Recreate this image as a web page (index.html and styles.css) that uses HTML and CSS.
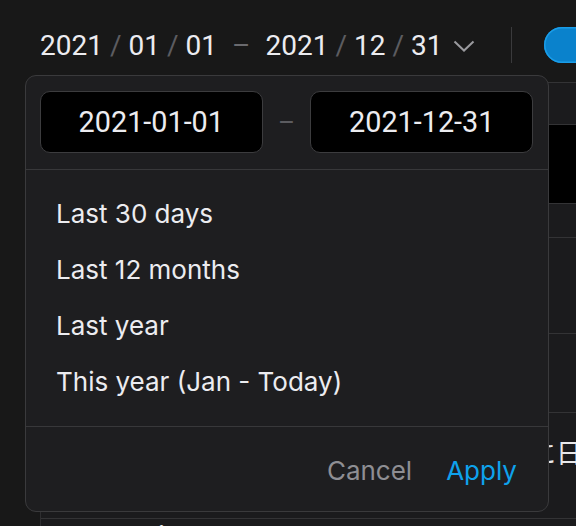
FILE: index.html
```html
<!DOCTYPE html>
<html>
<head>
<meta charset="utf-8">
<link rel="stylesheet" href="styles.css">
</head>
<body>
<div class="page">
  <div class="header">
    <span class="num">2021</span><span class="sl">/</span><span class="num">01</span><span class="sl">/</span><span class="num">01</span>
    <span class="dash">–</span>
    <span class="num">2021</span><span class="sl">/</span><span class="num">12</span><span class="sl">/</span><span class="num">31</span>
    <svg class="chev" width="22" height="12" viewBox="0 0 22 12"><polyline points="1.5,1.5 11,10.5 20.5,1.5" fill="none" stroke="#9a9a9e" stroke-width="2"/></svg>
    <span class="vdiv"></span>
    <span class="toggle"></span>
  </div>
  <div class="table">
    <div class="row r1"></div>
    <div class="row r2"></div>
    <div class="row r3"></div>
    <div class="row r4"></div>
    <div class="row r5"></div>
    <div class="row r6"><span class="cjk">に日</span></div>
    <div class="row r7"><span class="dot"></span><span class="bold">PP Timer</span><span class="jp">エドリテー フォーンド◯ゲ日</span></div>
  </div>

  <div class="popup">
    <div class="inputs">
      <div class="inp">2021-01-01</div>
      <span class="idash">–</span>
      <div class="inp">2021-12-31</div>
    </div>
    <ul class="menu">
      <li>Last 30 days</li>
      <li>Last 12 months</li>
      <li>Last year</li>
      <li>This year (Jan - Today)</li>
    </ul>
    <div class="footer">
      <span class="cancel">Cancel</span>
      <span class="apply">Apply</span>
    </div>
  </div>
</div>
</body>
</html>
```
FILE: styles.css
```css
html, body {
  margin: 0;
  padding: 0;
  background: #181818;
  width: 576px;
  height: 526px;
  overflow: hidden;
}
.page {
  position: relative;
  width: 576px;
  height: 526px;
  overflow: hidden;
  font-family: Roboto, "Liberation Sans", sans-serif;
  color: #ececf0;
}
.header {
  display: flex;
  align-items: center;
  height: 90px;
  padding-left: 40px;
  box-sizing: border-box;
  font-size: 28px;
  white-space: nowrap;
}
.header > * { flex: none; }
.num { color: #ececf0; }
.sl { color: #5c5c60; margin: 0 7px; }
.dash { color: #6a6a6e; margin: 0 15px; }
.chev { margin-left: 11px; margin-top: 2px; }
.vdiv {
  width: 1px;
  height: 36px;
  background: #3a3a3c;
  margin-left: 36px;
}
.toggle {
  width: 80px;
  height: 36px;
  border-radius: 18px;
  background: #0a82cc;
  box-shadow: inset 0 0 0 1.5px #1a9de8;
  margin-left: 32px;
}

.table {
  position: absolute;
  left: 40px;
  top: 82px;
  right: 0;
  bottom: 0;
  border-left: 1px solid #2e2e30;
  background: #1b1b1d;
}
.row {
  border-top: 1px solid #333335;
  box-sizing: border-box;
}
.r1 { height: 42px; }
.r2 { height: 79px; background: #000; }
.r3 { height: 34px; }
.r4 { height: 96px; }
.r5 { height: 79px; }
.r6 { height: 106px; position: relative; }
.r7 { height: 40px; display: flex; align-items: flex-start; padding-top: 2px; font-size: 22px; white-space: nowrap; }
.cjk {
  position: absolute;
  left: 489px;
  top: 20px;
  white-space: nowrap;
  font-family: "Noto Sans CJK JP", sans-serif;
  font-size: 26px;
  color: #e8e8ea;
}
.dot {
  width: 14px;
  height: 14px;
  border-radius: 50%;
  background: #0a82cc;
  margin-left: 23px;
  margin-top: 5px;
}
.bold { font-weight: bold; margin-left: 32px; font-family: Inter, sans-serif; }
.jp { margin-left: 40px; font-family: "Noto Sans CJK JP", sans-serif; color: #d8d8da; }

.popup {
  position: absolute;
  left: 25px;
  top: 75px;
  width: 524px;
  height: 437px;
  box-sizing: border-box;
  border: 1px solid #3a3a3c;
  border-radius: 11px;
  background: #1e1e20;
  display: flex;
  flex-direction: column;
}
.inputs {
  display: flex;
  align-items: center;
  padding: 15px 15px 16px 14px;
  border-bottom: 1px solid #38383a;
}
.inp {
  width: 223px;
  height: 62px;
  box-sizing: border-box;
  border: 1px solid #3c3c3e;
  border-radius: 10px;
  background: #000;
  display: flex;
  align-items: center;
  justify-content: center;
  font-size: 28.8px;
  color: #ececf0;
}
.idash {
  width: 48px;
  text-align: center;
  color: #5c5c60;
  font-size: 26px;
}
.menu {
  list-style: none;
  margin: 0;
  padding: 16px 0;
  border-bottom: 1px solid #38383a;
  font-family: Inter, "Noto Sans", sans-serif;
  font-size: 26px;
}
.menu li {
  height: 56px;
  line-height: 56px;
  padding-left: 30px;
  color: #ececf0;
}
.footer {
  flex: 1;
  display: flex;
  justify-content: flex-end;
  align-items: center;
  gap: 34px;
  padding-right: 31px;
  padding-top: 2px;
  font-family: Inter, "Noto Sans", sans-serif;
  font-size: 26px;
}
.cancel { color: #8e8e93; }
.apply { color: #0ea2ec; }
```
